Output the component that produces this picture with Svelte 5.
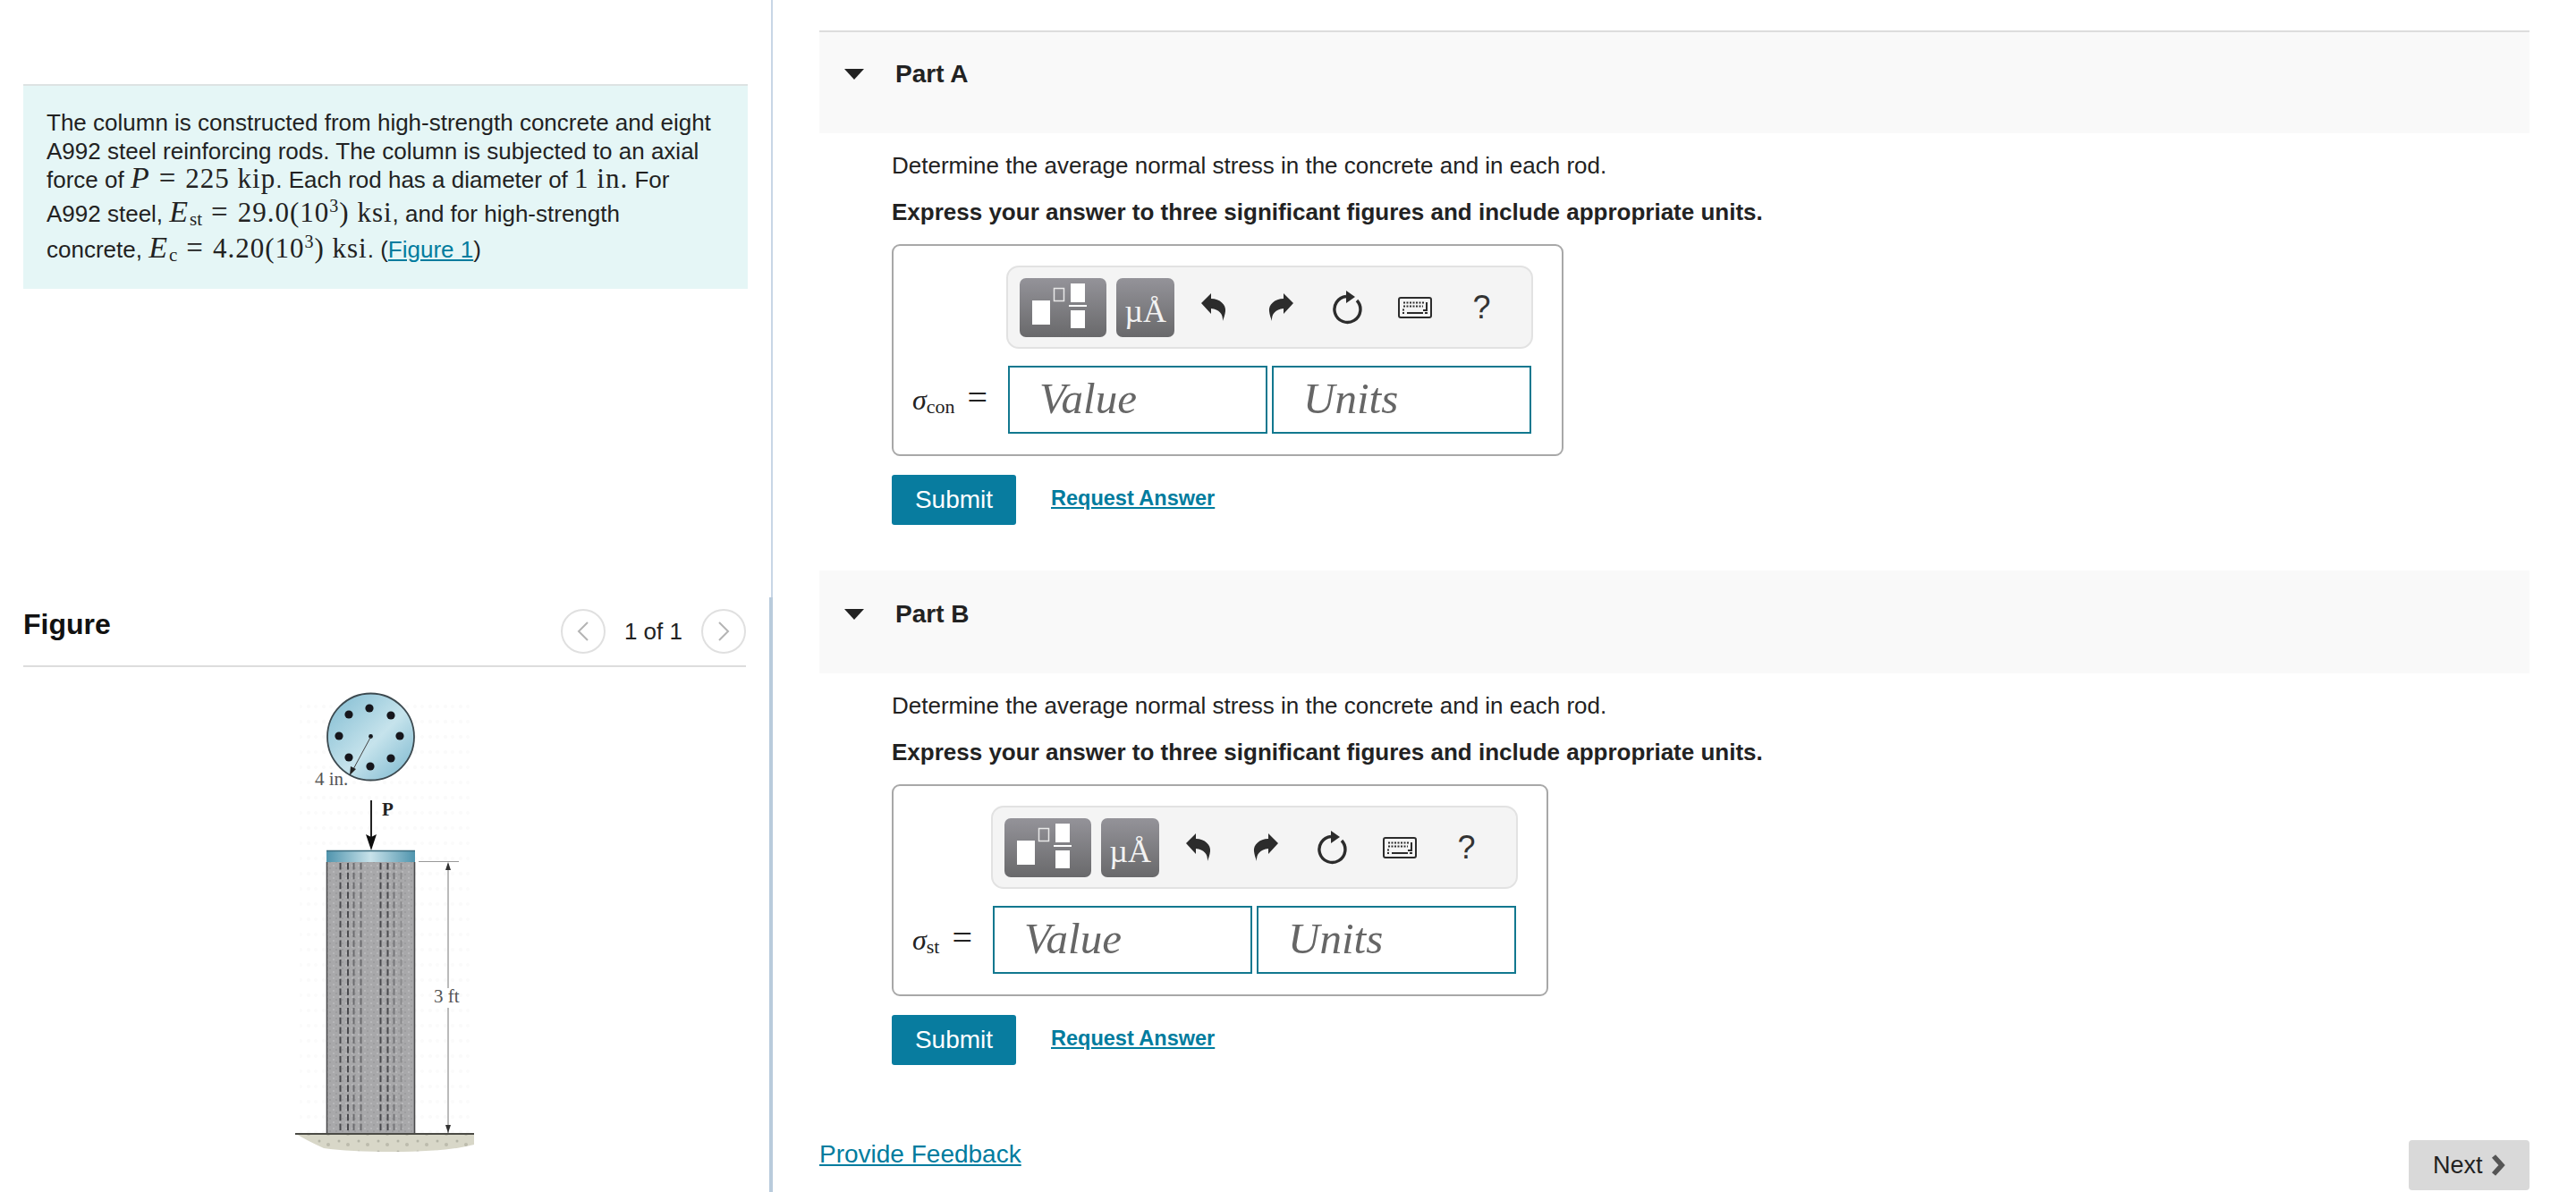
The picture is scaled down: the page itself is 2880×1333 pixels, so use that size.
<script>
  // two parts share the same answer block, only the sigma subscript changes
  const parts = [
    { name: 'Part A', sub: 'con' },
    { name: 'Part B', sub: 'st' }
  ];

  // rod positions in the column drawing
  const rodColumns = [
    { x: 379.5, fill: '#4a4a4d' },
    { x: 388, fill: '#4a4a4d' },
    { x: 394.5, fill: '#6c6c6f' },
    { x: 402.5, fill: '#6c6c6f' },
    { x: 424.5, fill: '#4a4a4d' },
    { x: 432.5, fill: '#4a4a4d' },
    { x: 439.5, fill: '#77777a' },
    { x: 447.5, fill: '#8a8a8c' }
  ];
  const rods = [];
  for (let y = 965; y < 1262; y += 10.8) rods.push(y);

  const sectionDots = [
    [413, 792], [390, 799], [437, 800], [379, 823], [447, 823], [390, 847], [437, 848], [414, 857]
  ];
</script>

<div class="page">
  <aside class="left">
    <div class="top-pane">
      <div class="intro">
        <p>
          <span class="line">The column is constructed from high-strength concrete and eight</span>
          <span class="line">A992 steel reinforcing rods. The column is subjected to an axial</span>
          <span class="line">force of <span class="m"><i>P</i><span class="eq">=</span>225 kip</span>. Each rod has a diameter of <span class="m">1 in.</span> For</span>
          <span class="line tall first">A992 steel, <span class="m"><i>E</i><sub>st</sub><span class="eq">=</span>29.0(10<sup>3</sup>) ksi</span>, and for high-strength</span>
          <span class="line tall">concrete, <span class="m"><i>E</i><sub>c</sub><span class="eq">=</span>4.20(10<sup>3</sup>) ksi</span>. (<a href="#fig">Figure 1</a>)</span>
        </p>
      </div>
    </div>

    <div class="figure-pane">
      <div class="figure-head">
        <h2>Figure</h2>
        <div class="pager">
          <button class="round" aria-label="Previous">
            <svg width="14" height="24" viewBox="0 0 14 24"><path d="M12 2 2 12l10 10" fill="none" stroke="#b4b4b4" stroke-width="2"/></svg>
          </button>
          <span>1 of 1</span>
          <button class="round" aria-label="Next">
            <svg width="14" height="24" viewBox="0 0 14 24"><path d="m2 2 10 10L2 22" fill="none" stroke="#b4b4b4" stroke-width="2"/></svg>
          </button>
        </div>
      </div>

      <div class="figure">
        <svg width="240" height="540" viewBox="295 760 240 540">
          <defs>
            <linearGradient id="disc" x1="0" y1="0" x2="1" y2="1">
              <stop offset="0" stop-color="#7fbbd1"/>
              <stop offset="0.55" stop-color="#c6e3ec"/>
              <stop offset="1" stop-color="#78b6cd"/>
            </linearGradient>
            <linearGradient id="cap" x1="0" y1="0" x2="1" y2="0">
              <stop offset="0" stop-color="#4f94ad"/>
              <stop offset="0.5" stop-color="#c8e2ea"/>
              <stop offset="1" stop-color="#4f94ad"/>
            </linearGradient>
            <pattern id="speck" width="7" height="7" patternUnits="userSpaceOnUse">
              <rect width="7" height="7" fill="#a8a8aa"/>
              <circle cx="2" cy="2" r="1" fill="#bcbcbe"/>
              <circle cx="5" cy="5" r="1" fill="#99999b"/>
            </pattern>
            <pattern id="ground" width="22" height="12" patternUnits="userSpaceOnUse">
              <rect width="22" height="12" fill="#d8d7c8"/>
              <circle cx="5" cy="4" r="1.500" fill="#b4b4a6"/>
              <circle cx="15" cy="8" r="2" fill="#bcbbac"/>
            </pattern>
            <pattern id="paper" width="17" height="17" patternUnits="userSpaceOnUse">
              <circle cx="5" cy="8" r="2" fill="#fafafa"/>
              <circle cx="13" cy="8" r="2" fill="#fbfbfb"/>
            </pattern>
            <filter id="soft"><feGaussianBlur stdDeviation="0.7"/></filter>
          </defs>

          <rect x="335" y="775" width="195" height="495" fill="url(#paper)"/>

          <g filter="url(#soft)">
            <circle cx="414.5" cy="824" r="48.500" fill="url(#disc)" stroke="#3c4a50" stroke-width="1.800"/>
            {#each sectionDots as [cx, cy]}
              <circle {cx} {cy} r="4.600" fill="#14181b"/>
            {/each}
            <circle cx="414.500" cy="823.500" r="2.400" fill="#14181b"/>
            <path d="M414.500 824 394 862" stroke="#444" stroke-width="1" fill="none"/>
            <path d="m391 867 1-10 6 3z" fill="#222"/>

            <path d="M415 895v45" stroke="#222" stroke-width="2"/>
            <path d="m409 933 6 18 6-18-6 3z" fill="#111"/>

            <path d="M331 1268h199v12q-30 8-90 8-50 0-78-4-18-8-31-16z" fill="url(#ground)"/>
            <rect x="366" y="964" width="97" height="303" fill="url(#speck)"/>
            {#each rodColumns as rod}
              {#each rods as y}
                <rect x={rod.x} {y} width="2" height="7.500" fill={rod.fill}/>
              {/each}
            {/each}
            <path d="M365.500 964v303M463.500 964v303" stroke="#4a4a4c" stroke-width="1.600"/>
            <rect x="365" y="951" width="99" height="13" fill="url(#cap)"/>
            <path d="M365 951.500h99" stroke="#3d6e80" stroke-width="1.400"/>
            <path d="M330 1268h200" stroke="#4b4b45" stroke-width="2"/>

            <path d="M468 963.500h45" stroke="#999" stroke-width="1"/>
            <path d="M501 966v139M501 1127v140" stroke="#777" stroke-width="1"/>
            <path d="m498 973 3-9 3 9zM498 1258l3 9 3-9z" fill="#333"/>
          </g>
          <text x="352" y="878" class="fig-text">4 in.</text>
          <text x="427" y="912" class="fig-text bold">P</text>
          <text x="485" y="1121" class="fig-text">3 ft</text>
        </svg>
      </div>
    </div>
  </aside>

  <main class="right">
    {#each parts as part}
      <section class="part">
        <header class="part-head">
          <svg class="caret" width="22" height="12" viewBox="0 0 22 12"><path d="M0 0h22L11 12z" fill="#222"/></svg>
          <h3>{part.name}</h3>
        </header>
        <div class="part-body">
          <p class="q">Determine the average normal stress in the concrete and in each rod.</p>
          <p class="q strong">Express your answer to three significant figures and include appropriate units.</p>

          <div class="answer">
            <div class="toolbar">
              <button class="tb-btn wide" aria-label="Templates">
                <svg width="97" height="66" viewBox="0 0 97 66">
                  <rect x="14" y="25" width="20" height="27" fill="#fff"/>
                  <rect x="38.500" y="11.500" width="11" height="14" fill="none" stroke="#e8e8e8" stroke-width="1.500"/>
                  <rect x="57" y="6" width="16" height="21" fill="#fff"/>
                  <rect x="55" y="30" width="20" height="2" fill="#fff"/>
                  <rect x="57" y="36" width="16" height="20" fill="#fff"/>
                </svg>
              </button>
              <button class="tb-btn narrow">µÅ</button>
              <button class="tb-icon undo" aria-label="Undo">
                <svg width="28" height="32" viewBox="0 0 28 32"><path d="M0 11 11 0v6c10 0 17 7 16 14-.4 4-2 8-3 11 .5-8-4-13-13-14v6z" fill="#2c2c2c"/></svg>
              </button>
              <button class="tb-icon" aria-label="Redo">
                <svg width="28" height="32" viewBox="0 0 28 32"><path d="M28 11 17 0v6C7 6 0 13 1 20c.4 4 2 8 3 11-.5-8 4-13 13-14v6z" fill="#2c2c2c"/></svg>
              </button>
              <button class="tb-icon" aria-label="Reset">
                <svg width="34" height="38" viewBox="0 0 34 38"><path d="M15 6.500A14.500 14.500 0 1 0 27 11" fill="none" stroke="#2c2c2c" stroke-width="3.400"/><path d="m15 0 10 7-10 7z" fill="#2c2c2c"/></svg>
              </button>
              <button class="tb-icon" aria-label="Keyboard">
                <svg width="38" height="24" viewBox="0 0 38 24">
                  <rect x="1" y="1" width="36" height="22" rx="2" fill="#f4f4f4" stroke="#2c2c2c" stroke-width="2"/>
                  <path d="M6 6.500h24M6 10.500h22" stroke="#2c2c2c" stroke-width="2" stroke-dasharray="2 1.500"/>
                  <path d="M32 6v9h-4" stroke="#2c2c2c" stroke-width="2" fill="none"/>
                  <path d="M10 18h18M5 18h2M30 18h3M5 14.500h2" stroke="#2c2c2c" stroke-width="2" fill="none"/>
                </svg>
              </button>
              <button class="tb-icon help">?</button>
            </div>

            <div class="label"><i>σ</i><sub>{part.sub}</sub><span class="label-eq">=</span></div>
            <div class="inputs">
              <div class="field">Value</div>
              <div class="field">Units</div>
            </div>
          </div>

          <div class="actions">
            <button class="submit">Submit</button>
            <a class="request" href="#req">Request Answer</a>
          </div>
        </div>
      </section>
    {/each}

    <footer class="foot">
      <a href="#fb">Provide Feedback</a>
      <button class="next">
        Next
        <svg width="18" height="26" viewBox="0 0 18 26"><path d="m4 3 9 10-9 10" fill="none" stroke="#555" stroke-width="5.500"/></svg>
      </button>
    </footer>
  </main>
</div>

<style>
  :global(body) {
    background: #fff;
    overflow: hidden;
  }
  .page {
    display: flex;
    height: 1333px;
    font-family: "Liberation Sans", Arial, sans-serif;
    font-size: 26px;
    color: #222;
  }
  button {
    font-family: inherit;
    border: 0;
    padding: 0;
    background: none;
  }
  a {
    color: #007c9e;
  }

  /* left column */
  .left {
    width: 864px;
    flex: none;
    display: flex;
    flex-direction: column;
  }
  .top-pane {
    height: 668px;
    box-sizing: border-box;
    padding: 94px 26px 0;
    border-right: 2px solid #c8d6e6;
  }
  .intro {
    background: #e5f6f6;
    border-top: 2px solid #dde3e3;
    height: 229px;
    box-sizing: border-box;
    padding: 25px 26px 0;
  }
  .intro p {
    margin: 0;
    font-size: 26px;
  }
  .line {
    display: block;
    line-height: 32px;
    white-space: nowrap;
  }
  .line.tall {
    line-height: 40px;
  }
  .line.first {
    margin-top: 2px;
  }
  .m {
    font-family: "Liberation Serif", serif;
    font-size: 31px;
    letter-spacing: 1px;
    line-height: 0;
  }
  .m i {
    font-size: 34px;
  }
  .eq {
    font-size: 33px;
    margin: 0 10px;
  }
  .m sub {
    font-size: 21px;
    line-height: 0;
    letter-spacing: 0;
    margin-left: 1px;
    vertical-align: -4px;
  }
  .m sup {
    font-size: 20px;
    line-height: 0;
  }
  .figure-pane {
    flex: 1;
    box-sizing: border-box;
    padding: 0 26px;
    border-right: 4px solid #b9cbdc;
  }
  .figure-head {
    display: flex;
    justify-content: space-between;
    align-items: flex-start;
    height: 78px;
    box-sizing: border-box;
    border-bottom: 2px solid #dddddd;
  }
  .figure-head h2 {
    margin: 12px 0 0;
    font-size: 32px;
    line-height: 36px;
    color: #111;
  }
  .pager {
    display: flex;
    align-items: center;
    gap: 21px;
    margin-top: 13px;
  }
  .round {
    width: 50px;
    height: 50px;
    box-sizing: border-box;
    border: 2px solid #e0e0e0;
    border-radius: 50%;
    background: #fff;
    display: flex;
    align-items: center;
    justify-content: center;
  }
  .figure {
    display: flex;
    padding-left: 269px;
    margin-top: 14px;
  }
  .fig-text {
    font-family: "Liberation Serif", serif;
    font-size: 21px;
    fill: #555;
  }
  .fig-text.bold {
    font-weight: bold;
    fill: #222;
  }

  /* right column */
  .right {
    flex: 1;
    min-width: 0;
    box-sizing: border-box;
    padding: 34px 52px 0;
  }
  .part-head {
    display: flex;
    align-items: flex-start;
    height: 115px;
    box-sizing: border-box;
    background: #f9f9f9;
    border-top: 2px solid transparent;
    padding: 30px 0 0 28px;
  }
  .part:first-child .part-head {
    border-top-color: #dddddd;
  }
  .caret {
    margin-top: 11px;
  }
  .part-head h3 {
    margin: 0 0 0 35px;
    font-size: 28px;
    line-height: 34px;
    color: #222;
  }
  .part-body {
    padding: 20px 0 0 81px;
  }
  .q {
    margin: 0 0 20px;
    line-height: 32px;
  }
  .strong {
    font-weight: bold;
  }
  .answer {
    display: grid;
    grid-template-columns: auto auto;
    width: fit-content;
    border: 2px solid #a8a8a8;
    border-radius: 9px;
    padding: 22px 32px 23px 21px;
  }
  .toolbar {
    grid-column: 2;
    display: flex;
    align-items: center;
    width: 589px;
    height: 93px;
    box-sizing: border-box;
    padding-left: 13px;
    background: #f4f4f4;
    border: 2px solid #e2e2e2;
    border-radius: 14px;
    margin-bottom: 19px;
  }
  .tb-btn {
    height: 66px;
    border-radius: 7px;
    background: linear-gradient(#949399, #69696b);
    color: #f2f2f2;
    display: flex;
    align-items: center;
    justify-content: center;
  }
  .wide {
    width: 97px;
  }
  .narrow {
    width: 65px;
    margin-left: 11px;
    font-family: "Liberation Serif", serif;
    font-size: 36px;
    line-height: 1;
    padding-top: 8px;
  }
  .tb-icon {
    width: 75px;
    display: flex;
    justify-content: center;
    font-size: 36px;
    color: #333;
  }
  .undo {
    margin-left: 6px;
  }
  .label {
    grid-column: 1;
    grid-row: 2;
    align-self: center;
    font-family: "Liberation Serif", serif;
    font-size: 32px;
    padding-right: 21px;
    white-space: nowrap;
  }
  .label sub {
    font-size: 22px;
    line-height: 0;
    vertical-align: -4px;
  }
  .label-eq {
    font-size: 40px;
    line-height: 0;
    margin-left: 14px;
  }
  .inputs {
    grid-column: 2;
    grid-row: 2;
    display: flex;
    gap: 5px;
    margin-left: 2px;
  }
  .field {
    width: 290px;
    height: 76px;
    box-sizing: border-box;
    border: 2px solid #12788f;
    padding-left: 33px;
    font-family: "Liberation Serif", serif;
    font-style: italic;
    font-size: 49px;
    line-height: 70px;
    color: #666;
  }
  .actions {
    display: flex;
    align-items: center;
    gap: 39px;
    margin-top: 21px;
  }
  .submit {
    width: 139px;
    height: 56px;
    border-radius: 3px;
    background: #087c9f;
    color: #fff;
    font-size: 28px;
  }
  .request {
    font-size: 23.500px;
    font-weight: bold;
    margin-top: -4px;
  }
  .part + .part {
    margin-top: 51px;
  }
  .foot {
    display: flex;
    justify-content: space-between;
    align-items: flex-start;
    margin-top: 84px;
  }
  .foot a {
    font-size: 28px;
    line-height: 32px;
  }
  .next {
    display: flex;
    align-items: center;
    gap: 8px;
    width: 135px;
    height: 56px;
    box-sizing: border-box;
    padding-left: 27px;
    background: #d9d9d9;
    border-radius: 4px;
    font-size: 27px;
    color: #222;
  }
</style>
